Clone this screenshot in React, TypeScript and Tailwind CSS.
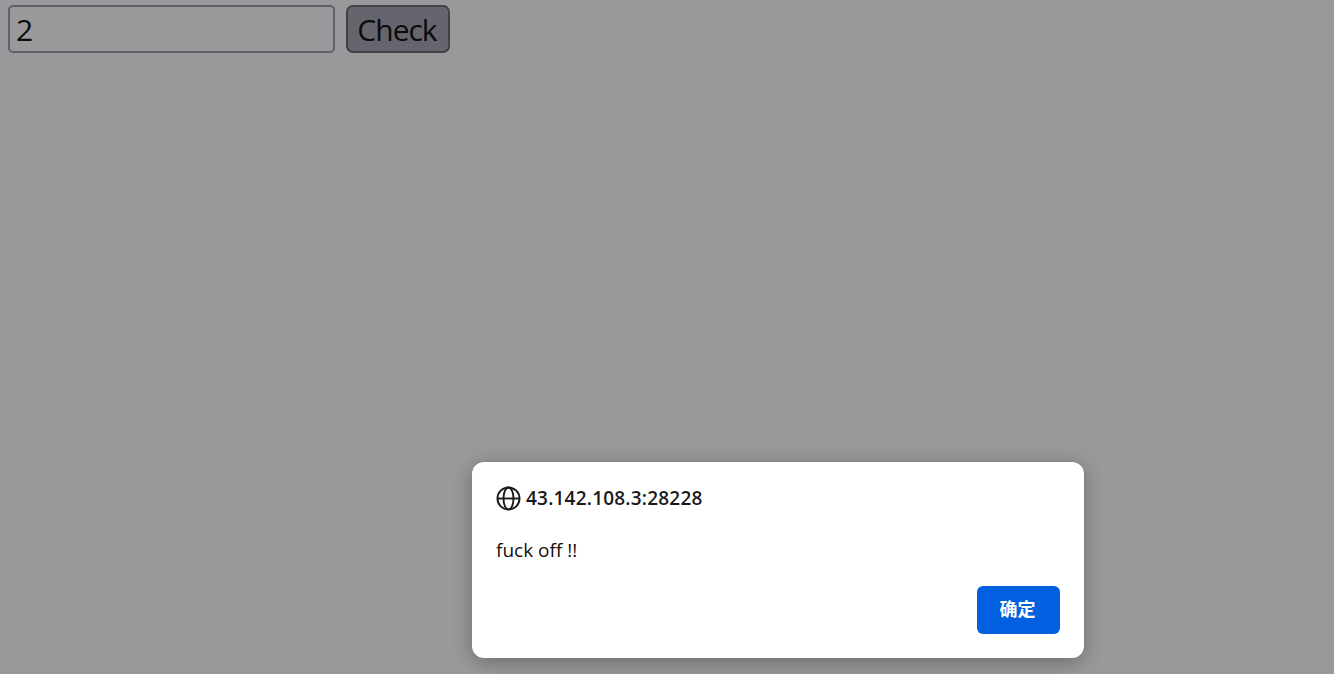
export default function App() {
  return (
    <div className="relative h-[674px] w-[1334px] overflow-hidden bg-[#99999b] font-['Open_Sans','Noto_Sans',sans-serif]">
      <div className="flex items-center gap-[11px] pl-2 pt-[5px]">
        <input
          defaultValue="2"
          className="h-12 w-[327px] rounded-[5px] border-2 border-[#626167] bg-transparent px-1.5 text-[30px] text-[#0b0b0d] outline-none"
        />
        <button className="h-12 w-[104px] rounded-[7px] border-2 border-[#414146] bg-[#66656d] pb-1 pr-0.5 text-[30px] tracking-[-1px] text-[#0b0b0d]">
          Check
        </button>
      </div>

      {/* alert */}
      <div className="absolute left-[472px] top-[462px] flex h-[196px] w-[612px] flex-col rounded-xl bg-white px-6 pt-6 shadow-[0_4px_20px_rgba(0,0,0,0.3)]">
        <div className="flex items-center gap-[5px] text-[#1a1a1c]">
          <svg width="25" height="25" viewBox="0 0 24 24" fill="none" stroke="currentColor" strokeWidth="1.8">
            <circle cx="12" cy="12" r="10.6" />
            <ellipse cx="12" cy="12" rx="4.8" ry="10.6" />
            <path d="M1.4 12h21.2" />
          </svg>
          <span className="pb-0.5 text-[19px] font-semibold leading-5 tracking-[0.2px]">43.142.108.3:28228</span>
        </div>
        <p className="mt-[27px] text-[19px] leading-6 text-[#16100e]">fuck off !!</p>
        <div className="mt-[24px] flex justify-end">
          <button className="h-12 w-[83px] rounded-md bg-[#0060df] pb-1 pr-0.5 font-['Noto_Sans_CJK_SC',sans-serif] text-lg font-bold text-white">
            确定
          </button>
        </div>
      </div>
    </div>
  );
}
